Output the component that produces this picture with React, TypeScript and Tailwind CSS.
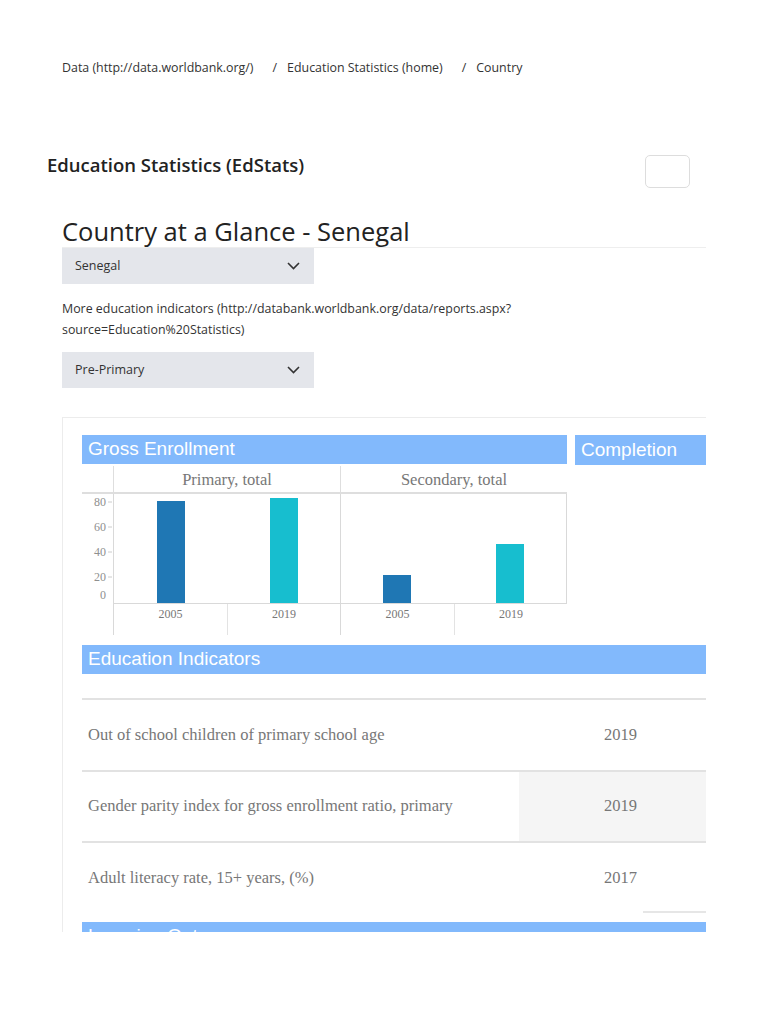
import type { ReactNode } from "react";

const crumbs = [
  "Data (http://data.worldbank.org/)",
  "Education Statistics (home)",
  "Country",
];

const indicators = [
  { label: "Out of school children of primary school age", year: "2019", shaded: false },
  { label: "Gender parity index for gross enrollment ratio, primary", year: "2019", shaded: true },
  { label: "Adult literacy rate, 15+ years, (%)", year: "2017", shaded: false },
];

function Chevron() {
  return (
    <svg width="13" height="8" viewBox="0 0 13 8" fill="none" aria-hidden>
      <path d="M1 1l5.5 5.5L12 1" stroke="#333" strokeWidth="1.6" />
    </svg>
  );
}

function SelectBox({ value }: { value: string }) {
  return (
    <div className="flex h-[36px] w-[252px] items-center justify-between bg-[#e4e6eb] pl-[13px] pr-[14px] text-[12.5px] text-[#333]">
      <span>{value}</span>
      <Chevron />
    </div>
  );
}

function SectionHeader({ children, className = "" }: { children: ReactNode; className?: string }) {
  return (
    <div
      className={`flex h-[29px] items-center bg-[#82b9fc] pl-[6px] font-['Liberation_Sans',Arial,sans-serif] text-[19px] text-white ${className}`}
    >
      {children}
    </div>
  );
}

function Panel({ bars, last }: { bars: { h: string; color: string }[]; last?: boolean }) {
  return (
    <div
      className={`grid h-[110px] grid-cols-2 items-end border-b border-l border-[#d9d9d9] ${last ? "border-r" : ""}`}
    >
      {bars.map((b, i) => (
        <div key={i} className="flex justify-center">
          <div className={`w-[28px] ${b.h} ${b.color}`} />
        </div>
      ))}
    </div>
  );
}

function YearLabels() {
  return (
    <div className="grid h-[31px] grid-cols-2 border-l border-[#d9d9d9]">
      {["2005", "2019"].map((y, i) => (
        <div
          key={y}
          className={`flex justify-center pt-[2px] text-[12px] leading-[16px] text-[#777] ${i === 1 ? "border-l border-[#e3e3e3]" : ""}`}
        >
          {y}
        </div>
      ))}
    </div>
  );
}

function Axis() {
  const ticks = [
    { v: "80", y: 8 },
    { v: "60", y: 33 },
    { v: "40", y: 58 },
    { v: "20", y: 83 },
  ];
  return (
    <svg width="31" height="110" className="block" aria-hidden>
      {ticks.map((t) => (
        <g key={t.v}>
          <text x="24" y={t.y + 4} textAnchor="end" fontFamily="Liberation Serif, serif" fontSize="12" fill="#8f8f8f">
            {t.v}
          </text>
          <line x1="26" x2="30" y1={t.y} y2={t.y} stroke="#ccc" />
        </g>
      ))}
      <text x="24" y="105" textAnchor="end" fontFamily="Liberation Serif, serif" fontSize="12" fill="#8f8f8f">
        0
      </text>
    </svg>
  );
}

function GrossEnrollment() {
  return (
    <div className="w-[485px]">
      <SectionHeader>Gross Enrollment</SectionHeader>
      <div className="grid grid-cols-[31px_227px_227px] font-['Liberation_Serif',serif]">
        <div className="h-[30px] border-b-2 border-[#dedede]" />
        <div className="mt-[2px] flex h-[28px] items-center justify-center border-b-2 border-l border-[#dedede] pt-[2px] text-[16.5px] text-[#777]">
          Primary, total
        </div>
        <div className="mt-[2px] flex h-[28px] items-center justify-center border-b-2 border-l border-[#dedede] pt-[2px] text-[16.5px] text-[#777]">
          Secondary, total
        </div>
        <Axis />
        <Panel
          bars={[
            { h: "h-[102px]", color: "bg-[#1f77b4]" },
            { h: "h-[105px]", color: "bg-[#17becf]" },
          ]}
        />
        <Panel
          last
          bars={[
            { h: "h-[28px]", color: "bg-[#1f77b4]" },
            { h: "h-[59px]", color: "bg-[#17becf]" },
          ]}
        />
        <div />
        <YearLabels />
        <YearLabels />
      </div>
    </div>
  );
}

export default function App() {
  return (
    <div className="h-[932px] w-[768px] overflow-hidden bg-white font-['Open_Sans',sans-serif] text-[#333]">
      <nav className="flex pl-[62px] pt-[59px] text-[12.4px] leading-[18px] text-[#333]">
        {crumbs.map((c, i) => (
          <span key={c} className="flex">
            {i > 0 && <span className="ml-[19px] mr-[10px]">/</span>}
            <span>{c}</span>
          </span>
        ))}
      </nav>

      <div className="mt-[76px] flex items-start justify-between pl-[47px] pr-[78px]">
        <h2 className="text-[18.5px] font-semibold leading-[24px] text-[#222]">Education Statistics (EdStats)</h2>
        <button className="mt-[2px] h-[33px] w-[45px] rounded-[5px] border border-[#ddd] bg-white" aria-label="menu" />
      </div>

      <main className="ml-[62px] w-[644px]">
        <h1 className="mt-[27px] h-[33px] border-b border-[#eee] text-[25.5px] leading-[32px] text-[#222]">
          Country at a Glance - Senegal
        </h1>
        <SelectBox value="Senegal" />
        <p className="mt-[14px] text-[12.4px] leading-[21px] text-[#333]">
          More education indicators (http://databank.worldbank.org/data/reports.aspx?
          <br />
          source=Education%20Statistics)
        </p>
        <div className="mt-[12px]">
          <SelectBox value="Pre-Primary" />
        </div>

        <section className="mt-[29px] border-l border-t border-[#ececec] pl-[19px] pt-[17px]">
          <div className="flex gap-[8px]">
            <GrossEnrollment />
            <SectionHeader className="h-[30px] flex-1">Completion</SectionHeader>
          </div>

          <SectionHeader className="mt-[10px]">Education Indicators</SectionHeader>

          <div className="mt-[24px] font-['Liberation_Serif',serif] text-[16.5px] text-[#777]">
            {indicators.map((row, i) => (
              <div
                key={row.label}
                className={`grid grid-cols-[437px_124px_63px] border-t-2 border-[#e2e2e2] ${i === 1 ? "h-[71px]" : "h-[72px]"}`}
              >
                <div className="flex items-center pl-[6px]">{row.label}</div>
                <div className={`flex items-center justify-end pr-[6px] ${row.shaded ? "bg-[#f5f5f5]" : ""}`}>
                  {row.year}
                </div>
                <div
                  className={`${row.shaded ? "bg-[#f5f5f5]" : ""} ${i === indicators.length - 1 ? "border-b-2 border-[#e6e6e6]" : ""}`}
                />
              </div>
            ))}
          </div>

          <SectionHeader className="mt-[9px]">Learning Outcomes</SectionHeader>
        </section>
      </main>
    </div>
  );
}
